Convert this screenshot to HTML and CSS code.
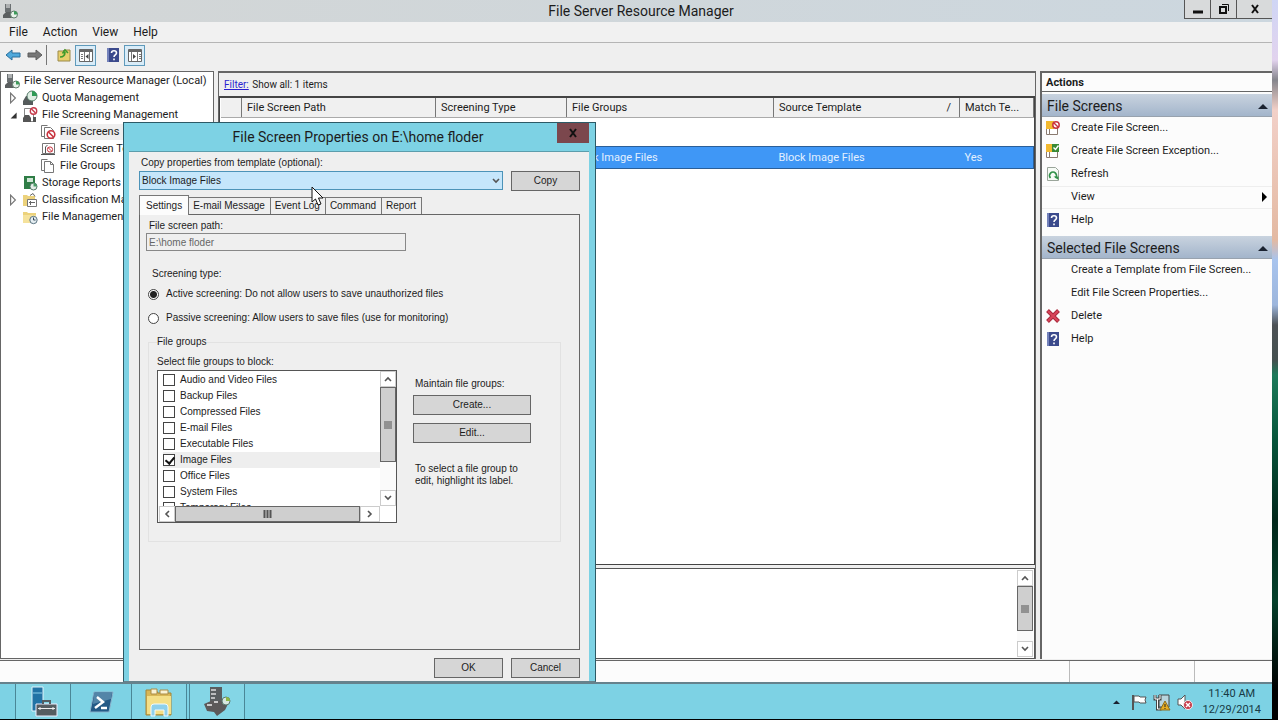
FILE: index.html
```html
<!DOCTYPE html>
<html lang="en">
<head>
    <meta charset="UTF-8">
    <meta name="viewport" content="width=device-width, initial-scale=1.0">
    <title>File Server Resource Manager</title>
    <link rel="stylesheet" href="styles.css">
</head>
<body>
    <!-- Shared icons -->
    <svg class="sprite" aria-hidden="true">
        <symbol id="server" viewBox="0 0 16 16">
            <path d="M3 1h6v8H3z" fill="#6b7072"/>
            <path d="M4 2h4M4 4h4" stroke="#eee"/>
            <path d="M1 15v-3l3-3h5l2 2v4z" fill="#5b5f60"/>
            <circle cx="12" cy="11.500" r="3.500" fill="#e8f2ea" stroke="#5f7a6a"/>
            <path d="M12 11.500V8a3.500 3.500 0 0 1 3.500 3.500z" fill="#3d9a5a"/>
        </symbol>
        <symbol id="quota" viewBox="0 0 16 16">
            <path d="M1 15v-4l3-5h4l3 4v5z" fill="#555b5c"/>
            <circle cx="10" cy="6" r="5" fill="#dfeee4" stroke="#557a68"/>
            <path d="M10 6V1a5 5 0 0 1 5 5z" fill="#2f9a56"/>
        </symbol>
        <symbol id="screening" viewBox="0 0 16 16">
            <path d="M2.500 1.500h9v13h-9z" fill="#fff" stroke="#888"/>
            <path d="M1 15v-4l2-3h4l2 3v4zM11 10h3v5h-3z" fill="#555"/>
            <circle cx="11.500" cy="4" r="3.200" fill="#fff" stroke="#c43b4b" stroke-width="1.400"/>
            <path d="M9.500 2l4 4" stroke="#c43b4b" stroke-width="1.400"/>
        </symbol>
        <symbol id="screens" viewBox="0 0 16 16">
            <path d="M4.500 12.500h-3V1.500h6" fill="none" stroke="#777"/>
            <path d="M4.500 3.500h6l3 3v8h-9z" fill="#fff" stroke="#777"/>
            <circle cx="11" cy="10.500" r="3.800" fill="#fff" stroke="#c9343f" stroke-width="1.600"/>
            <path d="M8.500 8l5 5" stroke="#c9343f" stroke-width="1.600"/>
        </symbol>
        <symbol id="template" viewBox="0 0 16 16">
            <path d="M2.500 2.500h12v10h-12z" fill="#fff" stroke="#777"/>
            <path d="M1 13.500h14M5.500 12V6l2-2" fill="none" stroke="#555"/>
            <circle cx="10" cy="8.500" r="2.600" fill="#fff" stroke="#c9343f"/>
            <path d="M8 6.500l4 4" stroke="#c9343f"/>
        </symbol>
        <symbol id="groups" viewBox="0 0 16 16">
            <path d="M4.500 12.500h-3V1.500h6" fill="none" stroke="#777"/>
            <path d="M4.500 3.500h6l3 3v8h-9zM10.500 3.500v3h3" fill="#fff" stroke="#777"/>
        </symbol>
        <symbol id="reports" viewBox="0 0 16 16">
            <path d="M2 1h11v13H2z" fill="#2f7d46"/>
            <path d="M5 3h6v4H5z" fill="#cfe5d5"/>
            <circle cx="11.500" cy="11.500" r="3.500" fill="#e5eee8" stroke="#557a68"/>
            <path d="M11.500 11.500V8a3.500 3.500 0 0 1 3.500 3.500z" fill="#4a9a66"/>
        </symbol>
        <symbol id="classify" viewBox="0 0 16 16">
            <path d="M1 3h4l1 1h7v10H1z" fill="#ecd27c"/>
            <path d="M5.500 7.500h9v7h-9z" fill="#fff" stroke="#777"/>
            <path d="M7 10.500h6M8.500 9v4M8 3.500l3-2 2 3" fill="none" stroke="#666"/>
        </symbol>
        <symbol id="tasks" viewBox="0 0 16 16">
            <path d="M1 3h4l1 1h8v10H1z" fill="#ecd27c"/>
            <path d="M1 6h13v8H1z" fill="#f5e29c"/>
            <circle cx="11.500" cy="11" r="3.700" fill="#e5eef2" stroke="#5a7482"/>
            <path d="M11.500 8.500V11h2" fill="none" stroke="#345"/>
        </symbol>
        <symbol id="help" viewBox="0 0 16 16">
            <path d="M2 1h12v14H2z" fill="#3b4a8c"/>
            <path d="M2 1h2v14H2z" fill="#7482bb"/>
            <path d="M6.500 6c0-3 5-3 5 0 0 2-2.500 1.800-2.500 4M9 11.500v1.800" fill="none" stroke="#fff" stroke-width="1.600"/>
        </symbol>
        <symbol id="newscreen" viewBox="0 0 16 16">
            <path d="M1.500 4.500h6v10h-6z" fill="#fff" stroke="#8a7a70"/>
            <path d="M4.500 5.500h8v9h-8z" fill="#fff" stroke="#8a7a70"/>
            <path d="M1 1h8v8H1z" fill="#f2b92f"/>
            <circle cx="11" cy="5" r="3.200" fill="#fff" stroke="#c9343f" stroke-width="1.500"/>
            <path d="M9 3l4 4" stroke="#c9343f" stroke-width="1.500"/>
        </symbol>
        <symbol id="exception" viewBox="0 0 16 16">
            <path d="M1.500 4.500h6v10h-6z" fill="#fff" stroke="#8a7a70"/>
            <path d="M4.500 5.500h8v9h-8z" fill="#fff" stroke="#8a7a70"/>
            <path d="M1 1h8v8H1z" fill="#f2b92f"/>
            <path d="M7 1h7v8H7z" fill="#3a8a35"/>
            <path d="M8.500 4.500l2 2 3-4" fill="none" stroke="#fff" stroke-width="1.400"/>
        </symbol>
        <symbol id="refresh" viewBox="0 0 16 16">
            <path d="M2.500 1.500h8l3 3v10h-11z" fill="#f6fbf6" stroke="#9aa59a"/>
            <path d="M5.500 12a3.500 3.500 0 1 1 5 0" fill="none" stroke="#32914a" stroke-width="1.700"/>
            <path d="M8.500 10.500h5V14z" fill="#32914a"/>
        </symbol>
        <symbol id="delete" viewBox="0 0 16 16">
            <path d="M2.500 2.500l11 11M13.500 2.500l-11 11" stroke="#a92a3c" stroke-width="4"/>
            <path d="M3 3l10 10M13 3L3 13" stroke="#d9455a" stroke-width="2"/>
        </symbol>
        <symbol id="up" viewBox="0 0 10 10"><path d="M2 7l3-3 3 3" fill="none" stroke="#555" stroke-width="1.600"/></symbol>
        <symbol id="down" viewBox="0 0 10 10"><path d="M2 3l3 3 3-3" fill="none" stroke="#555" stroke-width="1.600"/></symbol>
        <symbol id="left" viewBox="0 0 10 10"><path d="M7 2L4 5l3 3" fill="none" stroke="#555" stroke-width="1.600"/></symbol>
        <symbol id="right" viewBox="0 0 10 10"><path d="M3 2l3 3-3 3" fill="none" stroke="#555" stroke-width="1.600"/></symbol>
        <symbol id="grip" viewBox="0 0 10 10"><path d="M1 2h8M1 4h8M1 6h8M1 8h8" stroke="#555"/></symbol>
        <symbol id="triangle" viewBox="0 0 10 10"><path d="M0 8l5-5 5 5z" fill="#1a2230"/></symbol>
    </svg>

    <div class="screen">
        <div class="main">
            <!-- Application window -->
            <div class="window">
                <header class="titlebar">
                    <svg class="icon"><use href="#server"/></svg>
                    <h1>File Server Resource Manager</h1>
                    <div class="window-buttons">
                        <button aria-label="Minimize"><svg viewBox="0 0 14 12"><path d="M2 9h10" stroke="#111" stroke-width="3"/></svg></button>
                        <button aria-label="Restore"><svg viewBox="0 0 14 12"><path d="M3 4h6v6H3z" fill="none" stroke="#111" stroke-width="2"/><path d="M5 1.500h6.500V8" fill="none" stroke="#111"/></svg></button>
                        <button class="wide" aria-label="Close"><svg viewBox="0 0 14 12"><path d="M4 2l6 8M10 2L4 10" stroke="#111" stroke-width="2"/></svg></button>
                    </div>
                </header>

                <nav class="menubar">
                    <button>File</button>
                    <button>Action</button>
                    <button>View</button>
                    <button>Help</button>
                </nav>

                <div class="toolbar">
                    <button aria-label="Back"><svg viewBox="0 0 16 16"><path d="M1 8l6-5v3h8v4H7v3z" fill="#4fa9dc" stroke="#2b6f9c"/></svg></button>
                    <button aria-label="Forward"><svg viewBox="0 0 16 16"><path d="M15 8L9 3v3H1v4h8v3z" fill="#777" stroke="#5d5d5d"/></svg></button>
                    <span class="divider"></span>
                    <button aria-label="Up"><svg viewBox="0 0 16 16"><path d="M2 4h5l1-1h6v11H2z" fill="#e8cf6c" stroke="#9b8a4b"/><path d="M4 10c4 0 5-2 5-5M6.500 6.500L9 3l3 3" fill="none" stroke="#3d9a2d" stroke-width="1.600"/></svg></button>
                    <button class="pressed" aria-label="Show tree"><svg viewBox="0 0 16 16"><path d="M1.500 2.500h13v12h-13z" fill="#fff" stroke="#666"/><path d="M1 3h14v2H1z" fill="#666"/><path d="M6.500 5v9M11.500 5v9M3 7.500h2M3 9.500h2M3 11.500h2" stroke="#777"/><path d="M10.500 7v5L7.500 9.500z" fill="#444"/></svg></button>
                    <span class="gap"></span>
                    <button aria-label="Help"><svg><use href="#help"/></svg></button>
                    <button class="pressed" aria-label="Show actions"><svg viewBox="0 0 16 16"><path d="M1.500 2.500h13v12h-13z" fill="#fff" stroke="#666"/><path d="M1 3h14v2H1z" fill="#666"/><path d="M4.500 5v9M10.500 5v9M12 7.500h2M12 9.500h2M12 11.500h2" stroke="#777"/><path d="M6 7v5l3-2.500z" fill="#444"/></svg></button>
                </div>

                <div class="content">
                    <!-- Console tree -->
                    <ul class="tree">
                        <li class="root"><svg class="icon"><use href="#server"/></svg>File Server Resource Manager (Local)</li>
                        <li><span class="twist"><svg viewBox="0 0 8 10"><path d="M2 1l4 4-4 4z" fill="#fff" stroke="#777"/></svg></span><svg class="icon"><use href="#quota"/></svg>Quota Management</li>
                        <li><span class="twist"><svg viewBox="0 0 8 10"><path d="M7 3v5H2z" fill="#333"/></svg></span><svg class="icon"><use href="#screening"/></svg>File Screening Management</li>
                        <li class="child"><svg class="icon"><use href="#screens"/></svg><span class="current">File Screens</span></li>
                        <li class="child"><svg class="icon"><use href="#template"/></svg>File Screen Templates</li>
                        <li class="child"><svg class="icon"><use href="#groups"/></svg>File Groups</li>
                        <li><span class="twist"></span><svg class="icon"><use href="#reports"/></svg>Storage Reports</li>
                        <li><span class="twist"><svg viewBox="0 0 8 10"><path d="M2 1l4 4-4 4z" fill="#fff" stroke="#777"/></svg></span><svg class="icon"><use href="#classify"/></svg>Classification Management</li>
                        <li><span class="twist"></span><svg class="icon"><use href="#tasks"/></svg>File Management Tasks</li>
                    </ul>

                    <!-- File screen list -->
                    <div class="center">
                        <p class="filter"><a href="#">Filter:</a> Show all: 1 items</p>
                        <div class="list">
                            <table>
                                <colgroup>
                                    <col class="col-icon"><col class="col-path"><col class="col-type"><col class="col-groups"><col class="col-source"><col>
                                </colgroup>
                                <thead>
                                    <tr><th></th><th>File Screen Path</th><th>Screening Type</th><th>File Groups</th><th>Source Template <span class="sort">/</span></th><th>Match Te...</th></tr>
                                </thead>
                                <tbody>
                                    <tr class="spacer"><td colspan="6"></td></tr>
                                    <tr class="selected"><td></td><td></td><td></td><td>Block Image Files</td><td>Block Image Files</td><td>Yes</td></tr>
                                </tbody>
                            </table>
                        </div>
                        <div class="details">
                            <div class="scroll-y">
                                <button aria-label="Scroll up"><svg><use href="#up"/></svg></button>
                                <span class="thumb"><svg><use href="#grip"/></svg></span>
                                <button aria-label="Scroll down"><svg><use href="#down"/></svg></button>
                            </div>
                        </div>
                    </div>

                    <!-- Actions pane -->
                    <aside class="actions">
                        <h2>Actions</h2>
                        <h3>File Screens <svg><use href="#triangle"/></svg></h3>
                        <ul>
                            <li><button><svg class="icon"><use href="#newscreen"/></svg>Create File Screen...</button></li>
                            <li><button><svg class="icon"><use href="#exception"/></svg>Create File Screen Exception...</button></li>
                            <li><button><svg class="icon"><use href="#refresh"/></svg>Refresh</button></li>
                            <li><button class="lined"><span class="icon"></span>View<svg class="more" viewBox="0 0 6 10"><path d="M0 0l5 5-5 5z"/></svg></button></li>
                            <li><button><svg class="icon"><use href="#help"/></svg>Help</button></li>
                        </ul>
                        <h3>Selected File Screens <svg><use href="#triangle"/></svg></h3>
                        <ul>
                            <li><button><span class="icon"></span>Create a Template from File Screen...</button></li>
                            <li><button><span class="icon"></span>Edit File Screen Properties...</button></li>
                            <li><button><svg class="icon"><use href="#delete"/></svg>Delete</button></li>
                            <li><button><svg class="icon"><use href="#help"/></svg>Help</button></li>
                        </ul>
                    </aside>
                </div>

                <footer class="statusbar"><span></span><span></span></footer>
            </div>

            <!-- Taskbar -->
            <footer class="taskbar">
                <button class="open" aria-label="Server Manager"><svg viewBox="0 0 32 32"><path d="M5 1h11v24H5z" fill="#2273a5" stroke="#dff3fa"/><path d="M6 7h9" stroke="#8bd0ea"/><path d="M9 18h21v12H9z" fill="#555d61" stroke="#eef"/><path d="M16 18v-3h7v3" fill="none" stroke="#555d61" stroke-width="2"/><path d="M11 22.500h17M13 21v3M26 21v3" fill="none" stroke="#eee"/></svg></button>
                <button aria-label="PowerShell"><svg viewBox="0 0 32 32"><path d="M9 6h19l-4 20H5z" fill="#245a86" stroke="#8ab3cc"/><path d="M9 7h18l-1 6L8 18z" fill="#5385a8"/><path d="M12 11l6 5-8 6M16 22h6" fill="none" stroke="#fff" stroke-width="2.500"/></svg></button>
                <button class="open" aria-label="File Explorer"><svg viewBox="0 0 32 32"><path d="M3 4h10l2 3h13v22H3z" fill="#d8b757" stroke="#a58536"/><path d="M8 3h6v5H8zM17 4h8v4h-8z" fill="#f9f2d4" stroke="#ac8c45"/><path d="M4 10h24v18H4z" fill="#f4df87"/><path d="M8 30v-9q0-3 3-3h11q3 0 3 3v9h-4v-6h-9v6z" fill="#8ed0ec" stroke="#eefaff"/></svg></button>
                <button class="open" aria-label="File Server Resource Manager"><svg viewBox="0 0 32 32"><path d="M9 1h12v16H9z" fill="#5a5e60"/><path d="M10 4h5M10 8h5M10 12h4" stroke="#ddd" stroke-width="1.500"/><path d="M3 18l7-3h11l6 3-3 6-8 6-3-4-7-1z" fill="#5c5959"/><circle cx="25" cy="15" r="4" fill="#d7e8df" stroke="#5b7b70"/><path d="M25 15v-4a4 4 0 0 1 4 4z" fill="#8cb848"/><path d="M6 19h5M13 16h4" stroke="#eee" stroke-width="1.500"/></svg></button>
                <div class="tray">
                    <svg class="tray-up"><use href="#triangle"/></svg>
                    <svg viewBox="0 0 18 18"><path d="M3 2v15" stroke="#555" stroke-width="2"/><path d="M4 3h5l1 1h6l-1 3 1 3h-6l-1-1H4z" fill="#fff" stroke="#555"/></svg>
                    <svg viewBox="0 0 18 18"><path d="M6 2h10v12H6z" fill="#b8d4dd" stroke="#444"/><path d="M2 2v4h5V2M4.500 6v10h4" fill="none" stroke="#444" stroke-width="3"/><path d="M2 2v4h5V2M4.500 6v10h4" fill="none" stroke="#fff"/><path d="M12 8l5 9H7z" fill="#e6ac20" stroke="#8b6e20"/><path d="M12 11v3M12 15v1" stroke="#222"/></svg>
                    <svg viewBox="0 0 18 18"><path d="M2 6h3l4-4v14l-4-4H2z" fill="#fff" stroke="#555"/><circle cx="12" cy="12" r="4.500" fill="#c83b49" stroke="#eee"/><path d="M10 10l4 4M14 10l-4 4" stroke="#fff" stroke-width="1.400"/></svg>
                    <time class="clock">11:40 AM<br>12/29/2014</time>
                </div>
            </footer>
        </div>
        <div class="wallpaper"></div>
    </div>

    <!-- Properties dialog -->
    <div class="dialog" role="dialog" aria-labelledby="dialogTitle">
        <header class="dialog-title">
            <h2 id="dialogTitle">File Screen Properties on E:\home floder</h2>
            <button aria-label="Close"><svg viewBox="0 0 10 10"><path d="M2 1l6 8M8 1L2 9" stroke="#111" stroke-width="2"/></svg></button>
        </header>
        <form class="dialog-body">
            <label for="template-select">Copy properties from template (optional):</label>
            <div class="copy-row">
                <div class="select-wrap">
                    <select id="template-select"><option>Block Image Files</option></select>
                    <svg><use href="#down"/></svg>
                </div>
                <button type="button">Copy</button>
            </div>

            <div class="tabs" role="tablist">
                <button type="button" role="tab" class="active">Settings</button>
                <button type="button" role="tab">E-mail Message</button>
                <button type="button" role="tab">Event Log</button>
                <button type="button" role="tab">Command</button>
                <button type="button" role="tab">Report</button>
            </div>

            <div class="panel">
                <label for="path">File screen path:</label>
                <input type="text" id="path" value="E:\home floder" disabled>

                <div class="types">
                    <p>Screening type:</p>
                    <label><input type="radio" name="type" checked>Active screening: Do not allow users to save unauthorized files</label>
                    <label><input type="radio" name="type">Passive screening: Allow users to save files (use for monitoring)</label>
                </div>

                <fieldset>
                    <legend>File groups</legend>
                    <div class="group-left">
                        <p>Select file groups to block:</p>
                        <div class="checklist">
                            <div class="items">
                                <label><input type="checkbox">Audio and Video Files</label>
                                <label><input type="checkbox">Backup Files</label>
                                <label><input type="checkbox">Compressed Files</label>
                                <label><input type="checkbox">E-mail Files</label>
                                <label><input type="checkbox">Executable Files</label>
                                <label class="highlight"><input type="checkbox" checked>Image Files</label>
                                <label><input type="checkbox">Office Files</label>
                                <label><input type="checkbox">System Files</label>
                                <label><input type="checkbox">Temporary Files</label>
                            </div>
                            <div class="scroll-y">
                                <button type="button" aria-label="Scroll up"><svg><use href="#up"/></svg></button>
                                <span class="thumb"><svg><use href="#grip"/></svg></span>
                                <button type="button" aria-label="Scroll down"><svg><use href="#down"/></svg></button>
                            </div>
                            <div class="scroll-x">
                                <button type="button" aria-label="Scroll left"><svg><use href="#left"/></svg></button>
                                <span class="thumb"><svg viewBox="0 0 10 10"><path d="M1.500 1v8M4.500 1v8M7.500 1v8" stroke="#555" stroke-width="2"/></svg></span>
                                <button type="button" aria-label="Scroll right"><svg><use href="#right"/></svg></button>
                            </div>
                        </div>
                    </div>
                    <div class="group-right">
                        <p>Maintain file groups:</p>
                        <button type="button">Create...</button>
                        <button type="button">Edit...</button>
                        <p class="hint">To select a file group to edit, highlight its label.</p>
                    </div>
                </fieldset>
            </div>

            <div class="dialog-buttons">
                <button type="button">OK</button>
                <button type="button">Cancel</button>
            </div>
        </form>
    </div>

    <svg class="cursor" viewBox="0 0 14 20"><path d="M1 1v15l3.500-3 2.500 6 3-1-2.500-6H12z" fill="#fff" stroke="#111"/></svg>
</body>
</html>
```
FILE: styles.css
```css
* {
    box-sizing: border-box;
}

body {
    margin: 0;
    font-family: Roboto, "Open Sans", sans-serif;
    font-size: 11px;
    line-height: 16px;
    color: #1c1c1c;
    background: #000;
}

h1, h2, h3, p, ul, fieldset {
    margin: 0;
    padding: 0;
    font-weight: normal;
}

ul {
    list-style: none;
}

button, input, select {
    margin: 0;
    padding: 0;
    border: none;
    background: none;
    font: inherit;
    color: inherit;
}

svg {
    display: block;
    flex: none;
}

.sprite {
    position: absolute;
    width: 0;
    height: 0;
}

.icon {
    width: 16px;
    height: 16px;
    flex: none;
}

/* Screen */
.screen {
    display: flex;
    height: 100vh;
    min-height: 700px;
}

.main {
    flex: 1;
    display: flex;
    flex-direction: column;
    min-width: 0;
}

.wallpaper {
    width: 6px;
    background: linear-gradient(#cfd6f5 0, #e2d3ee 60px, #85858c 80px, #f2d0c8 110px, #e3b9a2 240px, #a8c4ee 260px, #9db6dc 305px, #4d5256 325px, #44504f 360px, #1d7a5a 375px, #07553b 440px, #02281c 520px, #05402b 600px, #000 690px);
}

.window {
    flex: 1;
    display: flex;
    flex-direction: column;
    min-height: 0;
    background: #efefef;
}

.titlebar {
    display: flex;
    align-items: center;
    height: 22px;
    padding-left: 2px;
    background: linear-gradient(90deg, #d3d6d6, #ccd7df);
}

.titlebar h1 {
    flex: 1;
    padding-left: 80px;
    font-size: 14px;
    text-align: center;
}

.window-buttons {
    display: flex;
    align-self: flex-start;
}

.window-buttons button {
    display: flex;
    align-items: center;
    justify-content: center;
    width: 26px;
    height: 19px;
    border: 1px solid #555;
    border-top: none;
    border-right: none;
    background: #d8dadb;
}

.window-buttons .wide {
    width: 36px;
}

.window-buttons svg {
    width: 14px;
    height: 12px;
}

.menubar {
    display: flex;
    gap: 15px;
    height: 21px;
    padding-left: 9px;
    background: #f1f1f1;
    border-bottom: 1px solid #b5b5b5;
    font-size: 12px;
}

.toolbar {
    display: flex;
    align-items: center;
    gap: 1px;
    height: 28px;
    padding: 0 2px 4px;
}

.toolbar button {
    display: flex;
    align-items: center;
    justify-content: center;
    width: 21px;
    height: 21px;
    border: 1px solid transparent;
}

.toolbar .pressed {
    background: #d9ecf8;
    border-color: #5f9abb;
}

.toolbar svg {
    width: 16px;
    height: 16px;
}

.toolbar .divider {
    width: 1px;
    height: 20px;
    margin-right: 5px;
    background: #777;
}

.toolbar .gap {
    width: 4px;
}

.content {
    flex: 1;
    display: flex;
    gap: 4px;
    min-height: 0;
}

/* Console tree */
.tree {
    width: 214px;
    background: #fff;
    border: 1px solid #666;
    overflow: hidden;
}

.tree li {
    display: flex;
    align-items: center;
    gap: 4px;
    height: 17px;
    padding-left: 7px;
    white-space: nowrap;
}

.tree .root {
    padding-left: 3px;
}

.tree .child {
    padding-left: 39px;
}

.tree .twist {
    width: 10px;
}

.tree .twist svg {
    width: 10px;
    height: 12px;
}

.tree .current {
    flex: 1;
    background: #eee;
}

/* File screen list */
.center {
    flex: 1;
    display: flex;
    flex-direction: column;
    min-width: 0;
    border: 1px solid #666;
    border-top-width: 2px;
    border-bottom: none;
}

.filter {
    height: 23px;
    padding: 4px 5px;
    font-size: 10px;
}

.filter a {
    margin-right: 1px;
    color: #2a1fd0;
}

.list {
    flex: 1;
    background: #fff;
    border: 1px solid #444;
    border-top-width: 2px;
}

.list table {
    width: 100%;
    border-collapse: collapse;
    table-layout: fixed;
}

.col-icon { width: 21px; }
.col-path { width: 194px; }
.col-type { width: 131px; }
.col-groups { width: 207px; }
.col-source { width: 186px; }

.list th {
    height: 19px;
    padding: 1px 5px 0;
    border-right: 1px solid #777;
    border-bottom: 1px solid #aaa;
    background: #f0f0f0;
    font-weight: normal;
    text-align: left;
    white-space: nowrap;
}

.list td {
    height: 22px;
    padding: 1px 5px 0;
}

.list .spacer td {
    height: 29px;
}

.list .selected {
    background: #3f97f6;
    border: 1px solid #2b5f98;
    color: #e3f0ff;
}

.sort {
    float: right;
    margin-right: 3px;
}

.details {
    display: flex;
    justify-content: flex-end;
    height: 91px;
    margin-top: 3px;
    padding: 1px;
    background: #fff;
    border: 1px solid #555;
}

.scroll-y {
    display: flex;
    flex-direction: column;
    width: 16px;
    background: #fafafa;
}

.scroll-y button, .scroll-x button {
    display: flex;
    align-items: center;
    justify-content: center;
    width: 16px;
    height: 16px;
    background: #fff;
    border: 1px solid #ccc;
}

.scroll-y svg, .scroll-x svg {
    width: 10px;
    height: 10px;
}

.thumb {
    display: flex;
    align-items: center;
    justify-content: center;
    background: #cfcfcf;
    border: 1px solid #666;
}

.scroll-y .thumb {
    flex: 1;
    margin-bottom: 10px;
}

/* Actions pane */
.actions {
    width: 232px;
    background: #fcfcfc;
    border-left: 2px solid #666;
    border-top: 2px solid #666;
}

.actions h2 {
    height: 19px;
    margin-bottom: 2px;
    padding-left: 4px;
    font-size: 11px;
    line-height: 20px;
    font-weight: bold;
    border-bottom: 1px solid #666;
}

.actions h3 {
    display: flex;
    align-items: center;
    justify-content: space-between;
    height: 23px;
    padding: 2px 4px 0 5px;
    font-size: 14px;
    background: linear-gradient(#c9d3df, #a3b5cb);
    border-bottom: 1px solid #98a2ae;
}

.actions h3 svg {
    width: 10px;
    height: 10px;
}

.actions li button {
    display: flex;
    align-items: center;
    gap: 10px;
    width: 100%;
    height: 23px;
    padding: 0 0 1px 3px;
    text-align: left;
}

.actions ul {
    height: 119px;
}

.actions .lined {
    border-top: 1px solid #eee;
    border-bottom: 1px solid #eee;
}

.actions .more {
    width: 6px;
    height: 10px;
    margin-left: auto;
    margin-right: 4px;
}

.statusbar {
    display: flex;
    justify-content: flex-end;
    height: 22px;
    margin-top: 1px;
    background: #fcfcfc;
    border-top: 1px solid #666;
}

.statusbar span {
    width: 125px;
    border-left: 1px solid #bbb;
}

.statusbar span:last-child {
    width: 78px;
}

/* Taskbar */
.taskbar {
    display: flex;
    height: 38px;
    padding-left: 15px;
    background: #7dd2e4;
    border-top: 2px solid #66828c;
    border-bottom: 1px solid #000;
}

.taskbar button {
    display: flex;
    align-items: center;
    justify-content: center;
    width: 60px;
}

.taskbar .open {
    width: 56px;
    border: solid #4a8797;
    border-width: 0 1px;
    background: #84d6e6;
}

.taskbar .open + .open {
    margin-left: 2px;
}

.taskbar button svg {
    width: 32px;
    height: 32px;
}

.tray {
    display: flex;
    align-items: center;
    gap: 5px;
    margin-left: auto;
    padding-right: 11px;
}

.tray svg {
    width: 18px;
    height: 18px;
}

.tray .tray-up {
    width: 7px;
    height: 8px;
    margin-right: 5px;
}

.clock {
    margin-left: 3px;
    text-align: center;
    color: #183a44;
}

/* Properties dialog */
.dialog {
    position: absolute;
    left: 123px;
    top: 122px;
    width: 473px;
    padding: 0 6px 0 5px;
    background: #7dd2e4;
    border: 1px solid #2c5a66;
    border-bottom-color: #66828c;
}

.dialog-title {
    display: flex;
    height: 28px;
}

.dialog-title h2 {
    flex: 1;
    padding-left: 30px;
    font-size: 14px;
    line-height: 28px;
    text-align: center;
}

.dialog-title button {
    display: flex;
    align-items: center;
    justify-content: center;
    width: 32px;
    height: 20px;
    background: #7b474d;
}

.dialog-title svg {
    width: 10px;
    height: 10px;
}

.dialog-body {
    padding: 3px 9px 3px 10px;
    background: #efefef;
    border-top: 1px solid #5c9dac;
    font-family: "Liberation Sans", Arial, sans-serif;
    font-size: 10px;
}

.dialog-body > label {
    display: block;
    padding-left: 2px;
}

.copy-row {
    display: flex;
    gap: 8px;
}

.copy-row button, .dialog-buttons button, .group-right button {
    width: 69px;
    height: 20px;
    background: #d6d6d6;
    border: 1px solid #666;
}

.select-wrap {
    position: relative;
    flex: 1;
}

.select-wrap select {
    width: 100%;
    height: 19px;
    padding-left: 2px;
    appearance: none;
    background: #c5e6fb;
    border: 1px solid #4c93b8;
}

.select-wrap svg {
    position: absolute;
    right: 2px;
    top: 5px;
    width: 10px;
    height: 10px;
    pointer-events: none;
}

.tabs {
    display: flex;
    align-items: flex-end;
    height: 23px;
}

.tabs button {
    height: 17px;
    padding: 0 5px 0 4px;
    border: 1px solid #777;
    border-left: none;
    border-bottom: none;
}

.tabs .active {
    height: 20px;
    margin-bottom: -1px;
    padding: 0 6px;
    border-left: 1px solid #777;
    background: #fcfcfc;
}

.panel {
    height: 436px;
    padding: 4px 18px 0 6px;
    border: 1px solid #666;
}

.panel > label {
    display: block;
    height: 14px;
    padding-left: 3px;
    line-height: 14px;
}

.panel > input {
    display: block;
    width: 260px;
    height: 18px;
    padding-left: 2px;
    border: 1px solid #888;
    color: #666;
}

.types {
    padding: 15px 3px 0 2px;
}

.types p {
    padding-left: 4px;
}

.types label {
    display: flex;
    align-items: center;
    gap: 7px;
    height: 24px;
}

.types input {
    appearance: none;
    width: 11px;
    height: 11px;
    border: 1px solid #444;
    border-radius: 50%;
    background: #fff;
}

.types input:checked {
    background: radial-gradient(#222 0 3px, #fff 4px);
}

fieldset {
    display: flex;
    gap: 16px;
    height: 208px;
    margin: 4px 0 0 2px;
    padding: 4px 8px;
    border: 1px solid #e2e2e2;
}

legend {
    padding: 0;
}

.checklist {
    display: grid;
    grid-template-columns: 1fr 16px;
    grid-template-rows: 135px 16px;
    width: 240px;
    border: 1px solid #555;
    background: #fff;
}

.checklist .items {
    overflow: hidden;
    padding: 1px 0 0 5px;
}

.items label {
    display: flex;
    align-items: center;
    gap: 5px;
    height: 16px;
}

.items .highlight {
    background: #eee;
}

.items input {
    appearance: none;
    width: 12px;
    height: 12px;
    border: 1px solid #444;
    background: #fff;
}

.items input:checked {
    position: relative;
}

.items input:checked::after {
    content: "";
    position: absolute;
    left: 3px;
    top: 0;
    width: 4px;
    height: 7px;
    border: solid #111;
    border-width: 0 2px 2px 0;
    transform: rotate(40deg);
}

.checklist .scroll-y .thumb {
    margin-bottom: 28px;
}

.scroll-x {
    display: flex;
    padding-left: 1px;
    background: #fafafa;
}

.scroll-x .thumb {
    flex: 1;
}

.scroll-x button:last-child {
    width: 20px;
}

.group-right {
    width: 118px;
    padding-top: 22px;
}

.group-right button {
    display: block;
    width: 100%;
    margin: 3px 0 8px;
}

.group-right p {
    padding-left: 2px;
}

.group-right .hint {
    padding-top: 12px;
    line-height: 12px;
}

.dialog-buttons {
    display: flex;
    justify-content: flex-end;
    gap: 8px;
    padding-top: 8px;
}

.cursor {
    position: absolute;
    left: 311px;
    top: 186px;
    width: 14px;
    height: 20px;
}
```
